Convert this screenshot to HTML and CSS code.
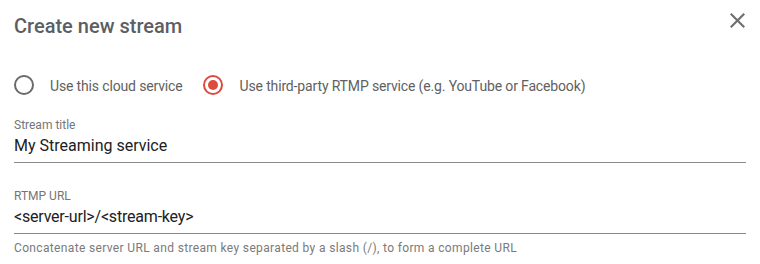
FILE: index.html
```html
<!DOCTYPE html>
<html>
<head>
<meta charset="utf-8">
<link rel="stylesheet" href="styles.css">
</head>
<body>
<div class="dialog">
  <div class="header">
    <h1 class="title">Create new stream</h1>
    <button class="close" aria-label="Close">
      <svg width="15" height="15" viewBox="5 5 14 14"><path d="M19 6.41L17.59 5 12 10.59 6.41 5 5 6.41 10.59 12 5 17.59 6.41 19 12 13.41 17.59 19 19 17.59 13.41 12z" fill="#6f6f6f"/></svg>
    </button>
  </div>
  <div class="radios">
    <label class="radio"><span class="circle"></span><span class="radio-text">Use this cloud service</span></label>
    <label class="radio checked"><span class="circle"><span class="dot"></span></span><span class="radio-text">Use third-party RTMP service (e.g. YouTube or Facebook)</span></label>
  </div>
  <div class="field first">
    <div class="field-label">Stream title</div>
    <div class="field-value">My Streaming service</div>
  </div>
  <div class="field">
    <div class="field-label">RTMP URL</div>
    <div class="field-value url">&lt;server-url&gt;/&lt;stream-key&gt;</div>
  </div>
  <div class="helper">Concatenate server URL and stream key separated by a slash (/), to form a complete URL</div>
</div>
</body>
</html>
```

FILE: styles.css
```css
html, body {
  margin: 0;
  padding: 0;
  background: #ffffff;
}
body {
  font-family: Roboto, "Liberation Sans", sans-serif;
}
.dialog {
  padding: 14px 14px 0 14px;
}
.header {
  display: flex;
  justify-content: space-between;
  align-items: flex-start;
}
.title {
  margin: 0;
  font-size: 20px;
  line-height: 24px;
  font-weight: 500;
  color: #5b5e63;
}
.close {
  border: 0;
  background: none;
  padding: 0;
  margin: -1px 1px 0 0;
  width: 15px;
  height: 15px;
  display: block;
  cursor: pointer;
}
.close svg {
  display: block;
}
.radios {
  display: flex;
  align-items: center;
  margin-top: 37px;
  gap: 20px;
}
.radio {
  display: flex;
  align-items: center;
  height: 20px;
}
.circle {
  box-sizing: border-box;
  width: 20px;
  height: 20px;
  border: 2px solid #6a6a6a;
  border-radius: 50%;
  display: flex;
  align-items: center;
  justify-content: center;
  margin-right: 16px;
}
.radio.checked .circle {
  border-color: #dd4a3e;
  margin-right: 17px;
}
.dot {
  width: 10px;
  height: 10px;
  border-radius: 50%;
  background: #dd4a3e;
}
.radio-text {
  font-size: 14px;
  line-height: 20px;
  letter-spacing: -0.15px;
  color: #616161;
  position: relative;
  top: 0.5px;
}
.field {
  margin-top: 25px;
  border-bottom: 1px solid #8a8a8a;
  padding-bottom: 4px;
}
.field.first {
  margin-top: 22px;
}
.field-label {
  font-size: 12px;
  line-height: 16px;
  color: #757575;
}
.field-value {
  font-size: 16px;
  line-height: 24px;
  color: #202124;
  margin-top: 1px;
}
.field-value.url {
  letter-spacing: -0.2px;
}
.helper {
  font-size: 12px;
  line-height: 16px;
  letter-spacing: 0.35px;
  color: #7a7a7a;
  margin-top: 6px;
}
```
